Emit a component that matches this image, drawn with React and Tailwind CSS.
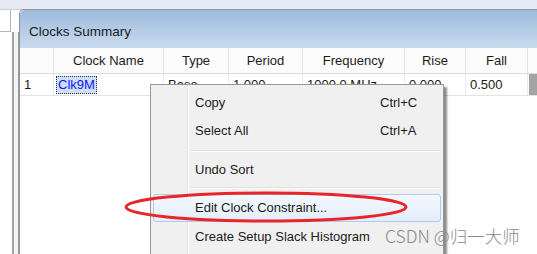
import React from "react";

const columns = [
  { label: "", w: "w-[34px]" },
  { label: "Clock Name", w: "w-[110px]" },
  { label: "Type", w: "w-[65px]" },
  { label: "Period", w: "w-[74px]" },
  { label: "Frequency", w: "w-[102px]" },
  { label: "Rise", w: "w-[61px]" },
  { label: "Fall", w: "w-[62px]" },
];

const row = ["1", "Clk9M", "Base", "1.000", "1000.0 MHz", "0.000", "0.500"];

const MenuItem = ({ label, shortcut, h, active }) => (
  <div className={`flex items-center ${h} ${active ? "mx-[2px] rounded-[3px] border border-[#aecbef] bg-gradient-to-b from-[#f3f8fe] to-[#e3edfa]" : "mx-[3px]"}`}>
    <div className="w-[41px]" />
    <span className="flex-1">{label}</span>
    {shortcut && <span className="w-[60px]">{shortcut}</span>}
  </div>
);

const Separator = ({ h }) => (
  <div className={`flex items-center ${h}`}>
    <div className="ml-[40px] mr-[3px] h-[2px] flex-1 border-t border-[#e0e0e0] bg-white" />
  </div>
);

export default function App() {
  return (
    <div
      className="relative h-[254px] w-[537px] overflow-hidden bg-white text-[13px] text-[#1b1b1b]"
      style={{ fontFamily: '"Liberation Sans", Arial, sans-serif' }}
    >
      {/* top strip */}
      <div className="h-[10px] border-b border-[#c9cfdc] bg-[#e6e9f4]" />

      <div className="flex h-[244px]">
        {/* left frame */}
        <div className="flex w-[19px] flex-col">
          <div className="h-[22px] w-[11px] border-r border-b border-[#b5b5b5] bg-white" />
          <div className="flex flex-1">
            <div className="w-[12px]" />
            <div className="w-[2px] bg-[#a3a3a3]" />
            <div className="w-[4px] bg-[#f4f4f4]" />
            <div className="w-[1px] bg-[#9a9a9a]" />
          </div>
        </div>

        {/* panel */}
        <div className="-mt-[1px] flex flex-1 flex-col rounded-tl-[5px] border-t border-l border-[#8a96a8]">
          <div className="flex h-[38px] items-center rounded-tl-[5px] bg-gradient-to-b from-[#9dbadb] to-[#cadcef] pl-[9px] pt-[6px] text-[13.5px]">
            Clocks Summary
          </div>
          {/* header row */}
          <div className="flex h-[26px] border-b border-[#d9d9d9] bg-[#fcfcfc]">
            {columns.map((c, i) => (
              <div key={i} className={`${c.w} flex items-center justify-center border-r border-[#e3e3e3]`}>
                {c.label}
              </div>
            ))}
            <div className="flex-1" />
          </div>
          {/* data row */}
          <div className="flex h-[22px] border-b border-[#e3e3e3]">
            {columns.map((c, i) => (
              <div key={i} className={`${c.w} flex items-center border-r border-[#ececec] px-[4px]`}>
                {i === 1 ? (
                  <span className="-ml-[2px] border border-dotted border-[#333] bg-[#cde0f7] px-[1px] leading-[16px] text-[#1414ff]">
                    {row[i]}
                  </span>
                ) : (
                  row[i]
                )}
              </div>
            ))}
            <div className="ml-[1px] flex-1 bg-[#a3a3a3]" />
          </div>
          <div className="flex-1 bg-white" />
        </div>
      </div>

      {/* context menu */}
      <div className="absolute left-[150px] top-[84px] h-[190px] w-[294px] border border-[#979797] bg-[#f0f0f0] pt-[4px] shadow-[3px_3px_2px_rgba(0,0,0,0.45)]">
        <div className="absolute left-[36px] top-0 bottom-0 w-[2px] border-l border-[#e2e3e3] bg-white" />
        <div className="relative">
          <MenuItem label="Copy" shortcut="Ctrl+C" h="h-[28px]" />
          <MenuItem label="Select All" shortcut="Ctrl+A" h="h-[27px]" />
          <Separator h="h-[14px]" />
          <MenuItem label="Undo Sort" h="h-[24px]" />
          <Separator h="h-[12px]" />
          <MenuItem label="Edit Clock Constraint..." h="h-[28px]" active />
          <MenuItem label="Create Setup Slack Histogram" h="h-[29px]" />
        </div>
      </div>

      {/* red annotation ellipse */}
      <svg className="pointer-events-none absolute left-0 top-0" width="537" height="254">
        <ellipse cx="266" cy="207" rx="140" ry="14" fill="none" stroke="#e8262a" strokeWidth="3" />
      </svg>

      {/* watermark */}
      <div
        className="absolute left-[385px] top-[223px] text-[17.5px] text-[#8a8a8a]"
        style={{ fontFamily: '"Noto Sans CJK SC", "Liberation Sans", sans-serif', fontWeight: 300 }}
      >
        CSDN @归一大师
      </div>
    </div>
  );
}
